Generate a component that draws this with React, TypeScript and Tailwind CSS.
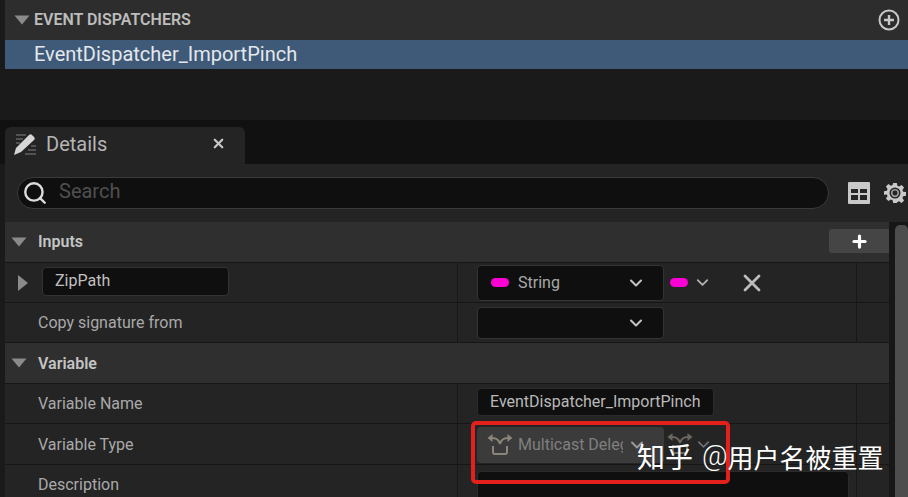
import { ChevronDown, Plus, Search, X } from "lucide-react";

const Caret = () => (
  <svg width="16" height="10" viewBox="0 0 16 10" className="shrink-0">
    <path d="M0.5 0.5H15.5L8 9.5Z" fill="#8a8a8a" />
  </svg>
);

function SectionHeader({ label, children }: { label: React.ReactNode; children?: React.ReactNode }) {
  return (
    <div className="h-[41px] shrink-0 flex items-center bg-[#2f2f2f] border-b border-[#171717] pl-[6px] relative">
      <span className="mr-[11px]"><Caret /></span>
      <span className="text-[16px] font-semibold text-[#c4c4c4]">{label}</span>
      {children}
    </div>
  );
}

function Row({ label, left, children, h = "h-[40px]" }: { label?: React.ReactNode; left?: React.ReactNode; children?: React.ReactNode; h?: string }) {
  return (
    <div className={`${h} shrink-0 flex border-b border-[#161616] bg-[#242424]`}>
      <div className="w-[453px] flex items-center pl-[33px] text-[16px] text-[#a9a9a9] border-r border-[#181818] shrink-0 relative">
        {left ?? label}
      </div>
      <div className="flex-1 flex items-center pl-[19px] min-w-0">{children}</div>
      <div className="w-[33px] border-l border-[#181818] shrink-0" />
    </div>
  );
}

function Pill() {
  return <span className="block w-[18px] h-[9px] rounded-full bg-[#ff00d4] shrink-0" />;
}

function DelegateIcon({ color }: { color: string }) {
  return (
    <svg width="26" height="24" viewBox="0 0 26 24" fill="none" stroke={color} strokeWidth="2" className="shrink-0">
      <path d="M6 13v6a2 2 0 0 0 2 2h10a2 2 0 0 0 2-2v-6" />
      <path d="M13 11C12 7 9 5 5 5M13 11C14 7 17 5 21 5" />
      <path d="M0.5 5l5-4v8zM25.5 5l-5-4v8z" fill={color} stroke="none" />
    </svg>
  );
}

function Gear() {
  return (
    <svg width="22" height="22" viewBox="0 0 24 24" className="shrink-0">
      <path
        fillRule="evenodd"
        fill="#c9c9c9"
        d="M10 1h4l.6 3.2 1.9.8 2.7-1.8 2.7 2.7-1.8 2.7.8 1.9 3.1.5v4l-3.1.6-.8 1.9 1.8 2.7-2.7 2.7-2.7-1.8-1.9.8L14 23h-4l-.6-3.2-1.9-.8-2.7 1.8-2.7-2.7 1.8-2.7-.8-1.9L0 14v-4l3.1-.5.8-1.9-1.8-2.7 2.7-2.7 2.7 1.8 1.9-.8zM12 6a6 6 0 1 0 0 12a6 6 0 1 0 0-12z"
      />
      <circle cx="12" cy="12" r="3.6" fill="none" stroke="#9a9a9a" strokeWidth="1.8" />
    </svg>
  );
}

export default function App() {
  return (
    <div className="w-[908px] h-[497px] overflow-hidden flex flex-col bg-[#1a1a1a] font-['Roboto',sans-serif] relative">
      {/* event dispatchers */}
      <div className="h-[120px] shrink-0 pl-[5px] bg-[#1a1a1a] flex flex-col">
        <div className="h-[40px] flex items-center bg-[#2d2d2d] pl-[9px] pr-[8px]">
          <span className="mr-[4px]"><Caret /></span>
          <span className="text-[16px] font-semibold text-[#bdbdbd] -mt-[1px]">EVENT DISPATCHERS</span>
          <svg width="22" height="22" viewBox="0 0 22 22" fill="none" stroke="#c8c8c8" className="ml-auto">
            <circle cx="11" cy="11" r="9.5" strokeWidth="2" />
            <path d="M11 6v10M6 11h10" strokeWidth="2.4" />
          </svg>
        </div>
        <div className="h-[29px] flex items-center bg-[#3f5a78] pl-[29px] text-[20px] text-[#e4e8ec]">
          <span className="-mt-[2px]">EventDispatcher_ImportPinch</span>
        </div>
      </div>

      {/* tab strip */}
      <div className="h-[44px] shrink-0 pt-[7px] pl-[5px] bg-[#111111] flex">
        <div className="w-[240px] rounded-t-[6px] bg-[#242424] flex items-center pl-[8px] pr-[19px] pb-[4px]">
          <svg width="24" height="24" viewBox="0 0 24 24" className="shrink-0">
            <path d="M3 3h10M3 7h7M3 11h4M12 22h11M15 18h8M18 14h5" stroke="#808080" strokeWidth="1.2" />
            <path d="M1 23l2-7L16 3c1-1 2-1 3 0l2 2c1 1 1 2 0 3L8 20z" fill="#d6d6d6" />
          </svg>
          <span className="ml-[9px] text-[20px] text-[#b5b5b5]">Details</span>
          <X size={15} strokeWidth={3.5} color="#c8c8c8" className="ml-auto" />
        </div>
      </div>

      <div className="flex-1 flex bg-[#1a1a1a] pl-[5px] min-h-0">
        <div className="flex-1 flex flex-col min-w-0 bg-[#242424]">
          {/* search */}
          <div className="h-[58px] shrink-0 flex items-center pl-[12px] -mr-[19px] overflow-hidden bg-[#242424]">
            <div className="w-[812px] h-[32px] rounded-full bg-[#0f0f0f] border border-[#3a3a3a] flex items-center pl-[4px] shrink-0">
              <Search size={26} strokeWidth={2.2} color="#dcdcdc" />
              <span className="ml-[11px] text-[20px] text-[#4f4f4f] -mt-[4px]">Search</span>
            </div>
            <svg width="22" height="22" viewBox="0 0 22 22" className="ml-[19px] shrink-0">
              <path fillRule="evenodd" d="M1 0h20a1 1 0 0 1 1 1v20a1 1 0 0 1-1 1H1a1 1 0 0 1-1-1V1a1 1 0 0 1 1-1zM3 7v4h7V7zM12 7v4h7V7zM3 13v5h7v-5zM12 13v5h7v-5z" fill="#c9c9c9" />
            </svg>
            <span className="ml-[14px]"><Gear /></span>
          </div>

          <SectionHeader label="Inputs">
            <div className="absolute right-0 top-[7px] w-[60px] h-[24px] rounded-l-[3px] bg-[#454545] flex items-center justify-center">
              <Plus size={19} strokeWidth={4} color="#ffffff" />
            </div>
          </SectionHeader>

          <Row
            left={
              <>
                <svg width="10" height="16" viewBox="0 0 10 16" className="absolute left-[13px] top-[12px]">
                  <path d="M0 0L10 8L0 16Z" fill="#8a8a8a" />
                </svg>
                <div className="w-[187px] h-[29px] ml-[4px] rounded-[4px] bg-[#0f0f0f] border border-[#333333] pl-[12px] flex items-center text-[#c0c0c0] -mt-[2px]">
                  <span className="-mt-[1px]">ZipPath</span>
                </div>
              </>
            }
          >
            <div className="w-[187px] h-[36px] rounded-[4px] bg-[#0f0f0f] border border-[#333333] flex items-center pl-[13px] pr-[17px] shrink-0">
              <Pill />
              <span className="ml-[9px] text-[16px] text-[#a9a9a9]">String</span>
              <ChevronDown size={20} strokeWidth={2.4} color="#c4c4c4" className="ml-auto" />
            </div>
            <span className="ml-[6px]"><Pill /></span>
            <ChevronDown size={19} strokeWidth={2.2} color="#b5b5b5" className="ml-[5px]" />
            <X size={28} strokeWidth={2.4} color="#bcbcbc" className="ml-[26px]" />
          </Row>

          <Row label="Copy signature from">
            <div className="w-[187px] h-[32px] rounded-[4px] bg-[#0f0f0f] border border-[#333333] flex items-center justify-end pr-[17px] shrink-0">
              <ChevronDown size={20} strokeWidth={2.4} color="#c4c4c4" />
            </div>
          </Row>

          <SectionHeader label={<span className="relative top-[1px]">Variable</span>} />

          <Row label="Variable Name">
            <div className="w-[237px] h-[28px] rounded-[4px] bg-[#0f0f0f] border border-[#2b2b2b] pl-[12px] flex items-center text-[16px] text-[#b9b9b9] shrink-0 whitespace-nowrap -mt-[3px]">
              <span className="-mt-[1px]">EventDispatcher_ImportPinch</span>
            </div>
          </Row>

          <Row label={<span className="mt-[1px]">Variable Type</span>} h="h-[41px]">
            <div className="w-[187px] h-[36px] mt-[2px] rounded-[4px] bg-[#3b3b3b] flex items-center pl-[10px] pr-[17px] shrink-0 overflow-hidden">
              <DelegateIcon color="#8a8578" />
              <span className="ml-[5px] text-[16px] text-[#7f7f7f] w-[105px] overflow-hidden whitespace-nowrap shrink-0">Multicast Delegate</span>
              <ChevronDown size={20} strokeWidth={2.4} color="#9a9a9a" className="ml-auto shrink-0" />
            </div>
            <span className="ml-[3px]"><DelegateIcon color="#6a665e" /></span>
            <ChevronDown size={19} strokeWidth={2.2} color="#6f6f6f" className="ml-[1px]" />
          </Row>

          <div className="flex-1 flex bg-[#242424]">
            <div className="w-[453px] pl-[33px] pt-[8px] text-[16px] text-[#a9a9a9] border-r border-[#181818]">Description</div>
            <div className="flex-1 pl-[19px] pt-[6px]">
              <div className="w-[372px] h-[40px] rounded-[4px] bg-[#0f0f0f] border border-[#2b2b2b]" />
            </div>
            <div className="w-[33px] border-l border-[#181818]" />
          </div>
        </div>

        {/* scrollbar */}
        <div className="w-[19px] shrink-0 bg-[#171717] pl-[6px] pt-[3px] mt-[58px]">
          <div className="h-full rounded-t-[5px] bg-[#4d4d4d]" />
        </div>
      </div>

      {/* annotation and watermark over the shot */}
      <div className="absolute left-[471px] top-[421px] w-[259px] h-[63px] rounded-[5px] border-[4px] border-[#e3201b]" />
      <div className="absolute left-[637px] top-[438px] h-[36px] flex items-center text-white whitespace-nowrap font-['Noto_Sans_CJK_SC',sans-serif]">
        <span className="text-[28px]">知乎</span>
        <span className="ml-[9px] text-[28px] font-['Roboto',sans-serif] font-light leading-none">@</span>
        <span className="text-[26px]">用户名被重置</span>
      </div>
    </div>
  );
}
